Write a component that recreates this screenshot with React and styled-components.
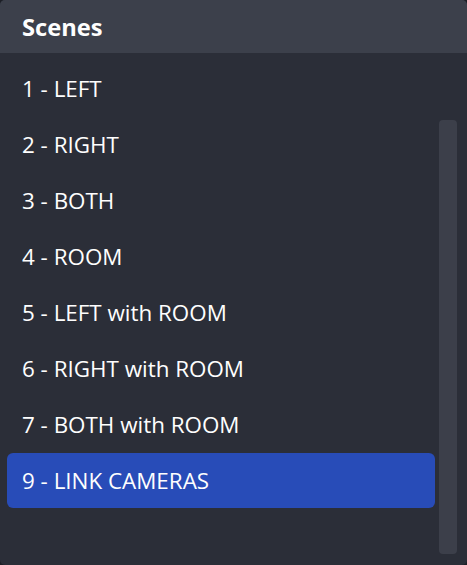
import React from 'react';
import styled, { createGlobalStyle } from 'styled-components';

const GlobalStyle = createGlobalStyle`
  html, body {
    margin: 0;
    padding: 0;
    background: #1d1f26;
  }
  #root {
    width: 467px;
    height: 565px;
  }
`;

const Dock = styled.div`
  width: 467px;
  height: 565px;
  background: #2b2e38;
  border-radius: 5px;
  overflow: hidden;
  display: flex;
  flex-direction: column;
  font-family: 'Open Sans', 'Noto Sans', sans-serif;
  color: #fefefe;
`;

const Title = styled.div`
  height: 53px;
  flex-shrink: 0;
  background: #3c404b;
  display: flex;
  align-items: center;
  padding-left: 22px;
  font-size: 23.7px;
  font-weight: 700;
`;

const Body = styled.div`
  flex: 1;
  display: flex;
  padding: 8px 10px 11px 7px;
  gap: 4px;
`;

const List = styled.div`
  flex: 1;
  display: flex;
  flex-direction: column;
  gap: 1px;
`;

const Item = styled.div`
  height: 55px;
  display: flex;
  align-items: center;
  padding-left: 15px;
  font-size: 22.4px;
  border-radius: 6px;
  background: ${p => (p.selected ? '#284cb8' : 'transparent')};
`;

const Track = styled.div`
  width: 18px;
  display: flex;
  flex-direction: column;
  padding-top: 59px;
`;

const Thumb = styled.div`
  flex: 1;
  background: #3c3f4a;
  border-radius: 4px;
`;

const scenes = [
  '1 - LEFT',
  '2 - RIGHT',
  '3 - BOTH',
  '4 - ROOM',
  '5 - LEFT with ROOM',
  '6 - RIGHT with ROOM',
  '7 - BOTH with ROOM',
  '9 - LINK CAMERAS',
];

export default function App() {
  return (
    <>
      <GlobalStyle />
      <Dock>
        <Title>Scenes</Title>
        <Body>
          <List>
            {scenes.map((s, i) => (
              <Item key={s} selected={i === scenes.length - 1}>{s}</Item>
            ))}
          </List>
          <Track>
            <Thumb />
          </Track>
        </Body>
      </Dock>
    </>
  );
}
